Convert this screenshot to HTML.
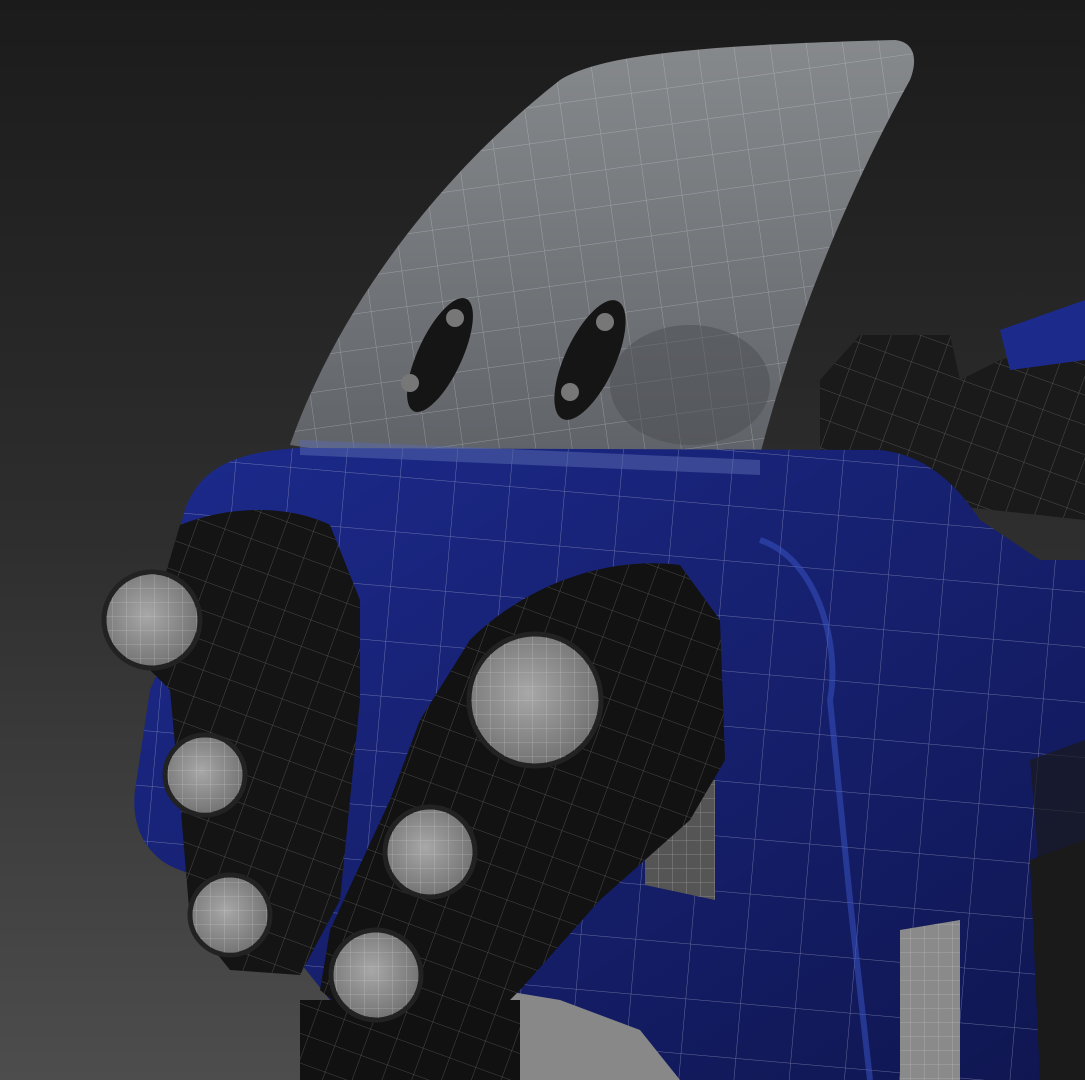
<!DOCTYPE html>
<html><head><meta charset="utf-8"><style>
html,body{margin:0;padding:0;width:1085px;height:1080px;overflow:hidden;background:#2a2a2a}
svg{display:block}
</style></head><body>
<svg width="1085" height="1080" viewBox="0 0 1085 1080" xmlns="http://www.w3.org/2000/svg">
<defs>
<linearGradient id="bg" x1="0" y1="0" x2="0" y2="1">
<stop offset="0" stop-color="#1b1b1b"/><stop offset="0.5" stop-color="#2e2e2e"/><stop offset="1" stop-color="#4d4d4d"/>
</linearGradient>
<linearGradient id="ws" x1="0" y1="0" x2="0" y2="1">
<stop offset="0" stop-color="#8c8f92"/><stop offset="0.6" stop-color="#72767a"/><stop offset="1" stop-color="#5e6268"/>
</linearGradient>
<linearGradient id="blue" x1="0" y1="0" x2="1" y2="1">
<stop offset="0" stop-color="#1c2a8c"/><stop offset="0.5" stop-color="#16206e"/><stop offset="1" stop-color="#0f1650"/>
</linearGradient>
<radialGradient id="lens" cx="0.45" cy="0.45" r="0.6">
<stop offset="0" stop-color="#a8a8a8"/><stop offset="1" stop-color="#6e6e6e"/>
</radialGradient>
<pattern id="grid" width="36" height="36" patternUnits="userSpaceOnUse" patternTransform="rotate(-8)">
<path d="M0 0H36M0 0V36" stroke="#d8dbe0" stroke-width="1" fill="none" opacity="0.4"/>
</pattern>
<pattern id="gridb" width="55" height="55" patternUnits="userSpaceOnUse" patternTransform="rotate(5)">
<path d="M0 0H55M0 0V55" stroke="#c8cbe0" stroke-width="1" fill="none" opacity="0.45"/>
</pattern>
<pattern id="gridk" width="28" height="28" patternUnits="userSpaceOnUse" patternTransform="rotate(20)">
<path d="M0 0H28M0 0V28" stroke="#bbbbbb" stroke-width="0.8" fill="none" opacity="0.4"/>
</pattern>
<pattern id="gridl" width="14" height="14" patternUnits="userSpaceOnUse">
<path d="M0 0H14M0 0V14" stroke="#e0e0e0" stroke-width="0.8" fill="none" opacity="0.45"/>
</pattern>
</defs>
<rect width="1085" height="1080" fill="url(#bg)"/>

<path d="M820 380 L860 335 L950 335 L960 380 L1000 360 L1085 340 L1085 520 L900 500 L820 460Z" fill="#1a1a1a"/>
<path d="M820 380 L860 335 L950 335 L960 380 L1000 360 L1085 340 L1085 520 L900 500 L820 460Z" fill="url(#gridk)"/>
<path d="M1000 330 L1085 300 L1085 360 L1010 370Z" fill="#1c2a8c"/>

<path d="M290 445 C330 330 420 190 560 80 C600 55 700 45 895 40 C915 42 918 60 910 80 C860 170 800 300 760 455 C750 480 735 492 710 495 C600 480 450 470 290 445Z" fill="url(#ws)" opacity="0.95"/>
<path d="M290 445 C330 330 420 190 560 80 C600 55 700 45 895 40 C915 42 918 60 910 80 C860 170 800 300 760 455 C750 480 735 492 710 495 C600 480 450 470 290 445Z" fill="url(#grid)"/>
<ellipse cx="690" cy="385" rx="80" ry="60" fill="#4a4c50" opacity="0.5"/>
<ellipse cx="440" cy="355" rx="22" ry="62" transform="rotate(25 440 355)" fill="#151515"/>
<ellipse cx="590" cy="360" rx="25" ry="65" transform="rotate(25 590 360)" fill="#151515"/>
<circle cx="455" cy="318" r="9" fill="#777"/><circle cx="410" cy="383" r="9" fill="#777"/>
<circle cx="605" cy="322" r="9" fill="#777"/><circle cx="570" cy="392" r="9" fill="#777"/>

<path d="M180 530 C190 470 230 452 300 448 L880 450 C930 455 960 490 980 520 L1040 560 L1085 560 L1085 1080 L500 1080 L480 1000 L330 1000 L250 900 L180 870 C150 860 130 830 135 790 L150 690 L180 620Z" fill="url(#blue)"/>
<path d="M180 530 C190 470 230 452 300 448 L880 450 C930 455 960 490 980 520 L1040 560 L1085 560 L1085 1080 L500 1080 L480 1000 L330 1000 L250 900 L180 870 C150 860 130 830 135 790 L150 690 L180 620Z" fill="url(#gridb)"/>
<path d="M760 540 C820 560 840 650 830 700 L850 900 L870 1080" stroke="#3a56c8" stroke-width="6" fill="none" opacity="0.5"/>
<path d="M300 440 L760 460 L760 475 L300 455Z" fill="#5a6ab0" opacity="0.5"/>
<path d="M1030 760 L1085 740 L1085 900 L1040 880Z" fill="#1a1a1a" opacity="0.7"/>
<path d="M645 790 L715 780 L715 900 L645 885Z" fill="#555"/>
<path d="M645 790 L715 780 L715 900 L645 885Z" fill="url(#gridl)"/>
<path d="M500 990 L560 1000 L640 1030 L680 1080 L500 1080Z" fill="#888"/>
<path d="M900 930 L960 920 L960 1080 L900 1080Z" fill="#8a8a8a"/>
<path d="M900 930 L960 920 L960 1080 L900 1080Z" fill="url(#gridl)"/>
<path d="M1030 860 L1085 840 L1085 1080 L1040 1080Z" fill="#1a1a1a"/>

<path d="M180 525 C230 505 290 505 330 525 L360 600 L360 700 L340 900 L300 975 L230 970 L190 920 L180 800 L170 690 L140 660Z" fill="#141414"/>
<path d="M180 525 C230 505 290 505 330 525 L360 600 L360 700 L340 900 L300 975 L230 970 L190 920 L180 800 L170 690 L140 660Z" fill="url(#gridk)"/>
<path d="M470 640 C520 590 600 555 680 565 L720 620 L725 760 L690 820 L600 900 L520 990 L470 1040 L380 1040 L320 990 L330 930 L390 800 L420 720Z" fill="#121212"/>
<path d="M470 640 C520 590 600 555 680 565 L720 620 L725 760 L690 820 L600 900 L520 990 L470 1040 L380 1040 L320 990 L330 930 L390 800 L420 720Z" fill="url(#gridk)"/>
<path d="M300 1000 L520 1000 L520 1080 L300 1080Z" fill="#111"/>
<path d="M300 1000 L520 1000 L520 1080 L300 1080Z" fill="url(#gridk)"/>

<g stroke="#222" stroke-width="5">
<circle cx="152" cy="620" r="48" fill="url(#lens)"/>
<circle cx="205" cy="775" r="40" fill="url(#lens)"/>
<circle cx="230" cy="915" r="40" fill="url(#lens)"/>
<circle cx="535" cy="700" r="66" fill="url(#lens)"/>
<circle cx="430" cy="852" r="45" fill="url(#lens)"/>
<circle cx="376" cy="975" r="45" fill="url(#lens)"/>
</g>
<g fill="url(#gridl)">
<circle cx="152" cy="620" r="46"/><circle cx="205" cy="775" r="38"/><circle cx="230" cy="915" r="38"/>
<circle cx="535" cy="700" r="64"/><circle cx="430" cy="852" r="43"/><circle cx="376" cy="975" r="43"/>
</g>
</svg>
</body></html>
